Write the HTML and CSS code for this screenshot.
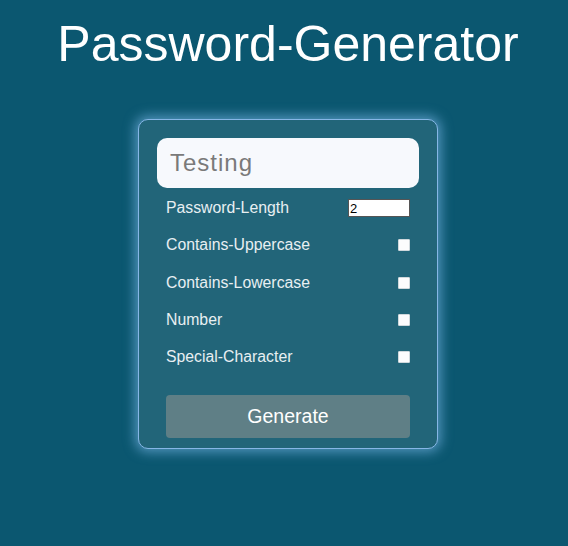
FILE: index.html
```
<!DOCTYPE html>
<html>
<head>
<meta charset="utf-8">
<link rel="stylesheet" href="styles.css">
</head>
<body>
<h1 class="title">Password-Generator</h1>
<div class="card">
  <div class="display">Testing</div>
  <div class="options">
    <div class="row"><span>Password-Length</span><input class="num" type="text" value="2"></div>
    <div class="row"><span>Contains-Uppercase</span><input class="check" type="checkbox"></div>
    <div class="row"><span>Contains-Lowercase</span><input class="check" type="checkbox"></div>
    <div class="row"><span>Number</span><input class="check" type="checkbox"></div>
    <div class="row"><span>Special-Character</span><input class="check" type="checkbox"></div>
  </div>
  <button class="generate">Generate</button>
</div>
</body>
</html>
```
FILE: styles.css
```
html, body {
  margin: 0;
  padding: 0;
  background: #0b5770;
}
body {
  padding-left: 8px;
  font-family: "Liberation Sans", Arial, sans-serif;
  min-height: 546px;
  box-sizing: border-box;
}
.title {
  margin: 16px 0 0;
  text-align: center;
  font-weight: normal;
  font-size: 50px;
  line-height: 57px;
  color: #ffffff;
}
.card {
  width: 300px;
  box-sizing: border-box;
  margin: 46px auto 0;
  background: #226579;
  border: 1px solid #86b6e6;
  border-radius: 10px;
  box-shadow: 0 0 12px 3px rgba(130, 190, 240, 0.6);
  padding: 18px 18px 10px;
  display: flex;
  flex-direction: column;
}
.display {
  height: 50px;
  background: #f7f9fd;
  border-radius: 10px;
  color: #7a7a7a;
  font-size: 24px;
  letter-spacing: 1px;
  line-height: 50px;
  padding-left: 13px;
}
.options {
  display: flex;
  flex-direction: column;
  padding: 1.5px 9px 0;
}
.row {
  height: 37.3px;
  display: flex;
  align-items: center;
  justify-content: space-between;
  color: #e8eff2;
  font-size: 15.8px;
}
.num {
  width: 62px;
  height: 18px;
  box-sizing: border-box;
  margin: 0;
  border: 1px solid #555;
  background: #fff;
  font-family: "Liberation Sans", Arial, sans-serif;
  font-size: 13px;
  padding: 0 1px;
  color: #000;
  outline: none;
}
.check {
  -webkit-appearance: none;
  appearance: none;
  width: 12px;
  height: 12px;
  margin: 0;
  background: #fcfcfd;
  border: 1px solid #d0d8dc;
  border-radius: 1px;
}
.generate {
  margin: 19.5px 9px 0;
  height: 43px;
  border: none;
  border-radius: 4px;
  background: #5f7f86;
  color: #ffffff;
  font-family: "Liberation Sans", Arial, sans-serif;
  font-size: 19.5px;
}
```
